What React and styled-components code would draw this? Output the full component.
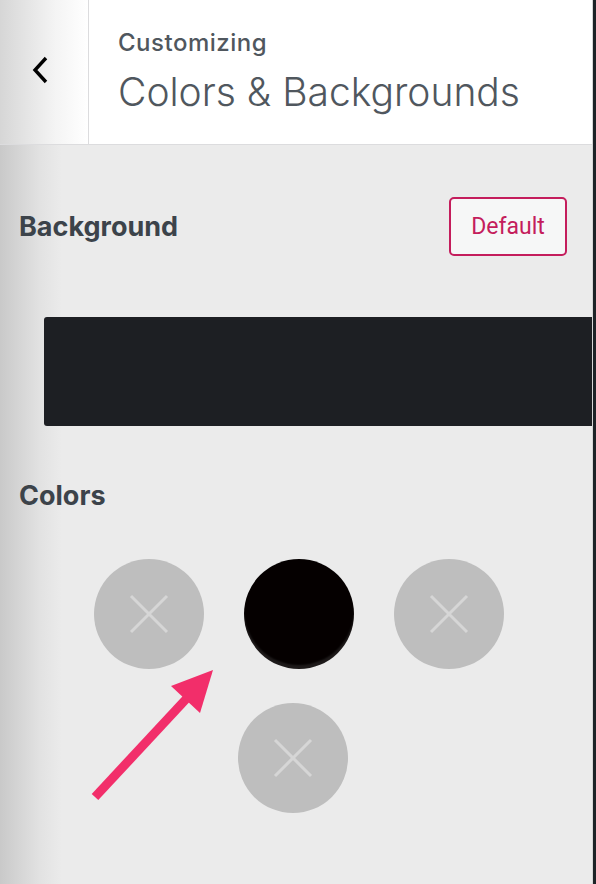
import React from 'react';
import styled, { createGlobalStyle } from 'styled-components';

const GlobalStyle = createGlobalStyle`
  html, body {
    margin: 0;
    padding: 0;
    background: #ebebeb;
  }
  #root {
    width: 596px;
    height: 884px;
  }
`;

const Page = styled.div`
  display: flex;
  width: 596px;
  height: 884px;
  overflow: hidden;
  font-family: Inter, "Liberation Sans", sans-serif;
`;

const Panel = styled.div`
  position: relative;
  flex: 1;
  display: flex;
  flex-direction: column;
  background: linear-gradient(to right, #c9c9c9 0, #e2e2e2 40px, #ebebeb 62px, #ebebeb 100%);
  border-right: 1px solid #d6d6d6;
`;

const EdgeStrip = styled.div`
  width: 3px;
  background: #1d2327;
`;

const Header = styled.header`
  display: flex;
  height: 144px;
  background: #fff;
  border-bottom: 1px solid #dcdcde;
`;

const BackButton = styled.button`
  width: 89px;
  display: flex;
  align-items: center;
  justify-content: center;
  padding: 0 8px 4px 0;
  border: none;
  border-right: 1px solid #dcdcde;
  background: linear-gradient(to right, #d6d6d6 0, #f4f4f4 55px, #fff 88px);
  cursor: pointer;
`;

const TitleBlock = styled.div`
  display: flex;
  flex-direction: column;
  justify-content: center;
  padding: 0 0 1px 29px;
  color: #50575e;
`;

const Kicker = styled.span`
  font-size: 24px;
  line-height: 30px;
  font-weight: 500;
  letter-spacing: 0.5px;
  color: #50575e;
`;

const Title = styled.h1`
  margin: 11px 0 0;
  font-size: 39px;
  line-height: 46px;
  font-weight: 300;
`;

const Section = styled.section`
  display: flex;
  flex-direction: column;
  padding: 0 25px 0 19px;
`;

const SectionHead = styled.div`
  display: flex;
  align-items: center;
  justify-content: space-between;
  margin-top: ${({ $top }) => $top}px;
`;

const Label = styled.h2`
  margin: 0;
  font-size: 27px;
  line-height: 30px;
  font-weight: 700;
  color: #3c434a;
`;

const DefaultButton = styled.button`
  width: 118px;
  height: 59px;
  border: 2px solid #c41d5c;
  border-radius: 5px;
  background: #f6f7f7;
  color: #c41d5c;
  font-family: Roboto, "Liberation Sans", sans-serif;
  font-size: 23px;
  cursor: pointer;
`;

const ColorBar = styled.div`
  height: 109px;
  margin: 61px -25px 0 25px;
  background: #1d1f23;
  border-radius: 3px 0 0 3px;
`;

const Swatches = styled.div`
  display: flex;
  flex-wrap: wrap;
  justify-content: center;
  gap: 34px 40px;
  width: 410px;
  margin: 48px 0 0 75px;
`;

const Swatch = styled.button`
  width: 110px;
  height: 110px;
  padding: 0;
  border: none;
  border-radius: 50%;
  background: ${({ $color }) => $color || '#bebebe'};
  box-shadow: ${({ $color }) => ($color ? 'inset 0 -4px 2px rgba(255,255,255,0.1)' : 'none')};
  transform: translateX(${({ $shift }) => $shift || 0}px);
  display: flex;
  align-items: center;
  justify-content: center;
  cursor: pointer;
`;

const Arrow = styled.svg`
  position: absolute;
  left: 0;
  top: 0;
  pointer-events: none;
`;

function ClearMark() {
  return (
    <svg width="40" height="40" viewBox="0 0 40 40">
      <path d="M2 2 L38 38 M38 2 L2 38" stroke="#d6d6d6" strokeWidth="3" />
    </svg>
  );
}

export default function App() {
  return (
    <>
      <GlobalStyle />
      <Page>
        <Panel>
          <Header>
            <BackButton aria-label="Back">
              <svg width="18" height="28" viewBox="0 0 18 28">
                <path d="M15 2 L4 14 L15 26" fill="none" stroke="#000" strokeWidth="3.4" />
              </svg>
            </BackButton>
            <TitleBlock>
              <Kicker>Customizing</Kicker>
              <Title>Colors &amp; Backgrounds</Title>
            </TitleBlock>
          </Header>

          <Section>
            <SectionHead $top={52}>
              <Label>Background</Label>
              <DefaultButton>Default</DefaultButton>
            </SectionHead>
            <ColorBar />

            <SectionHead $top={55}>
              <Label>Colors</Label>
            </SectionHead>
            <Swatches>
              <Swatch aria-label="Clear"><ClearMark /></Swatch>
              <Swatch $color="#050000" aria-label="Black" />
              <Swatch aria-label="Clear"><ClearMark /></Swatch>
              <Swatch $shift={-6} aria-label="Clear"><ClearMark /></Swatch>
            </Swatches>
          </Section>

          <Arrow width="592" height="884" viewBox="0 0 592 884">
            <line x1="95" y1="797" x2="188" y2="697" stroke="#f22e6a" strokeWidth="9" />
            <polygon points="213,670 171,686 200,713" fill="#f22e6a" />
          </Arrow>
        </Panel>
        <EdgeStrip />
      </Page>
    </>
  );
}
